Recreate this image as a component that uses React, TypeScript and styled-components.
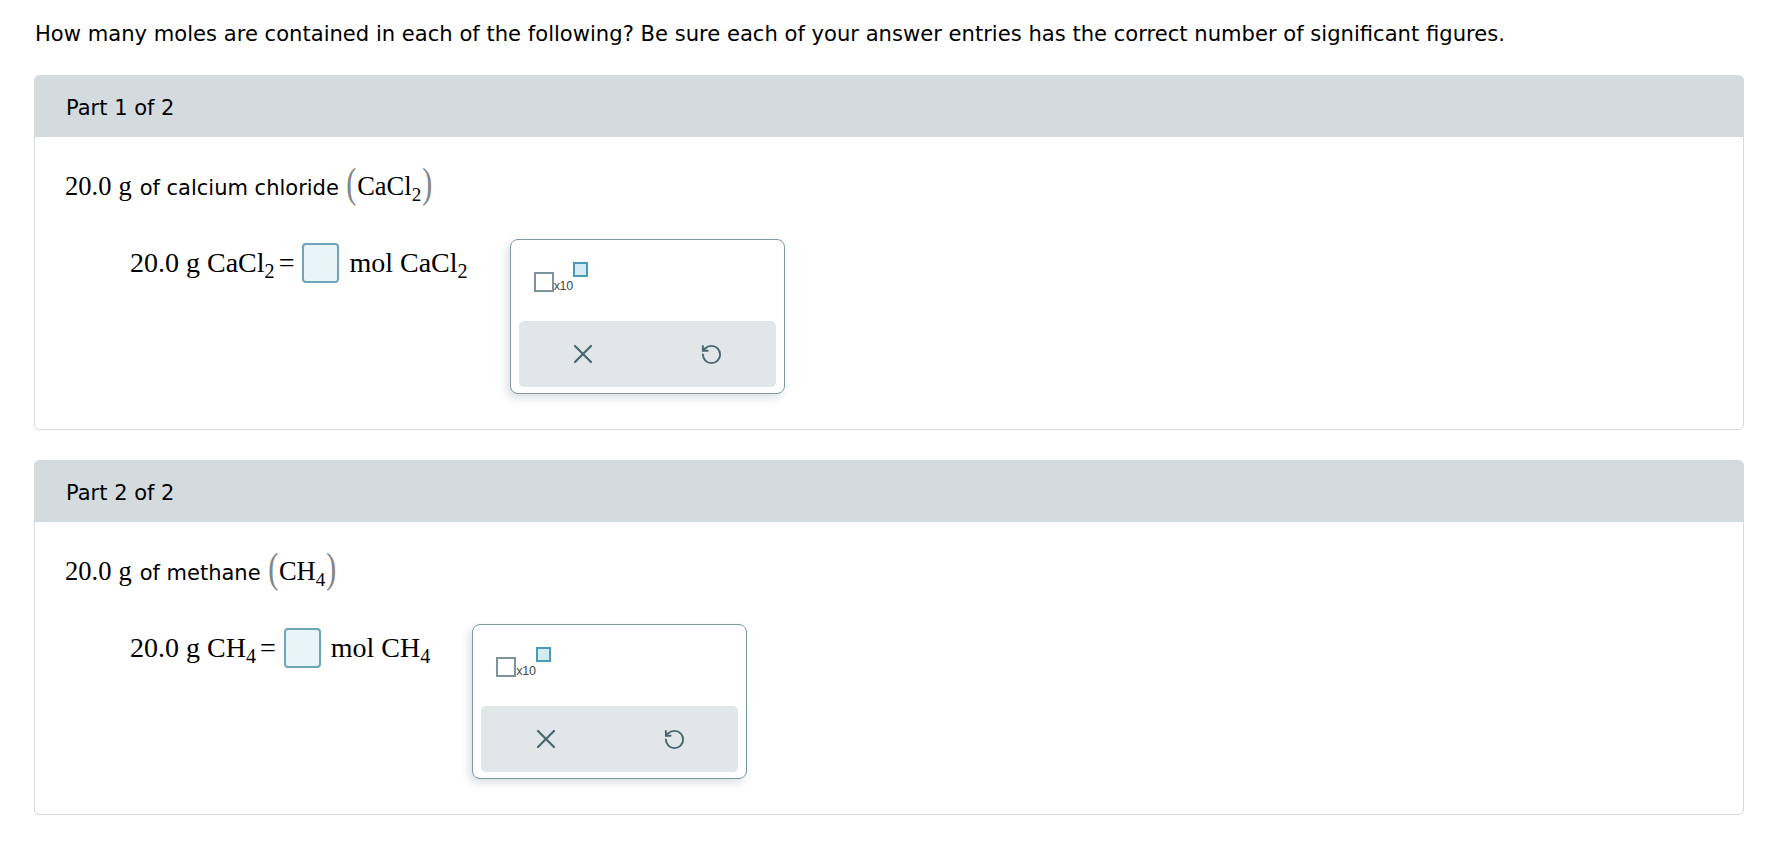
import React from "react";
import styled, { createGlobalStyle } from "styled-components";

const GlobalStyle = createGlobalStyle`
  html, body { margin: 0; padding: 0; background: #ffffff; }
  body {
    font-family: "DejaVu Sans", Verdana, sans-serif;
    color: #000000;
  }
`;

const Page = styled.main`
  padding: 19px 40px 40px 34px;
`;

const Question = styled.p`
  margin: 0 0 26px 1px;
  font-size: 21.1px;
  line-height: 30px;
`;

const PartCard = styled.section`
  border: 1px solid #d6dbde;
  border-radius: 5px;
  overflow: hidden;
  margin-bottom: 30px;
  background: #ffffff;
`;

const PartHeader = styled.header`
  height: 61px;
  background: #d3dbdf;
  display: flex;
  align-items: center;
  padding: 2px 31px 0 31px;
  box-sizing: border-box;
  font-size: 21px;
`;

const PartBody = styled.div`
  padding: 29px 30px 35px 30px;
`;

const Prompt = styled.div`
  height: 40px;
  line-height: 40px;
  font-family: "Liberation Serif", "Times New Roman", serif;
  font-size: 26.5px;
  white-space: nowrap;
`;

const SansText = styled.span`
  font-family: "DejaVu Sans", Verdana, sans-serif;
  font-size: 21px;
  margin: 0 6px 0 8px;
`;

const Num = styled.span`
  margin-right: 7px;
`;

const Paren = styled.span`
  color: #858585;
  font-size: 1.62em;
  line-height: 0;
  display: inline-block;
  transform: scaleX(0.7) translateY(2px);
  margin: 0 -1px;
`;

const Sub = styled.sub`
  font-size: 0.72em;
  vertical-align: -0.3em;
  line-height: 0;
`;

const AnswerRow = styled.div`
  margin-top: 33px;
  padding-left: 65px;
  display: flex;
  align-items: flex-start;
`;

const Equation = styled.div`
  margin-top: 4px;
  height: 40px;
  line-height: 40px;
  font-family: "Liberation Serif", "Times New Roman", serif;
  font-size: 28px;
  white-space: nowrap;
`;

const Equals = styled.span`
  margin: 0 8px 0 4px;
`;

const AnswerBox = styled.span`
  box-sizing: border-box;
  display: inline-block;
  vertical-align: top;
  width: 37px;
  height: 40px;
  border: 2px solid #6ea6b8;
  border-radius: 4px;
  background: #e8f4f8;
  margin-right: 10px;
`;

const Palette = styled.div`
  box-sizing: border-box;
  margin-left: 42px;
  width: 275px;
  height: 155px;
  border: 1px solid #7f98a2;
  border-radius: 8px;
  background: #ffffff;
  box-shadow: -3px 4px 8px rgba(60, 80, 90, 0.18);
  padding: 8px 8px 6px 8px;
  display: flex;
  flex-direction: column;
  justify-content: space-between;
`;

const SciWidget = styled.div`
  display: flex;
  align-items: flex-start;
  margin: 14px 0 0 15px;
  height: 40px;
`;

const BaseBox = styled.span`
  box-sizing: border-box;
  width: 20px;
  height: 20px;
  border: 2px solid #7e929a;
  margin-top: 10px;
  background: #ffffff;
`;

const Times10 = styled.span`
  font-family: "Liberation Sans", Arial, sans-serif;
  font-size: 12.5px;
  color: #3c4a50;
  margin-top: 17px;
  letter-spacing: -0.3px;
`;

const ExpBox = styled.span`
  box-sizing: border-box;
  width: 15px;
  height: 15px;
  border: 2px solid #4b9bb3;
  background: #d3ecf4;
`;

const ButtonBar = styled.div`
  height: 66px;
  background: #e1e6e9;
  border-radius: 5px;
  display: grid;
  grid-template-columns: 1fr 1fr;
  align-items: center;
  justify-items: center;
`;

const IconButton = styled.button`
  border: 0;
  background: transparent;
  padding: 0;
  width: 28px;
  height: 28px;
  display: flex;
  align-items: center;
  justify-content: center;
  color: #4a6670;
  cursor: pointer;
`;

const CloseIcon = () => (
  <svg width="22" height="22" viewBox="0 0 22 22" fill="none">
    <path d="M3 3 L19 19 M19 3 L3 19" stroke="currentColor" strokeWidth="2.2" strokeLinecap="round" />
  </svg>
);

const UndoIcon = () => (
  <svg width="23" height="23" viewBox="0 0 24 24" fill="none" stroke="currentColor" strokeWidth="2" strokeLinecap="round" strokeLinejoin="round">
    <path d="M3 12a9 9 0 1 0 9-9 9.75 9.75 0 0 0-6.74 2.74L3 8" />
    <path d="M3 3v5h5" />
  </svg>
);

type Part = {
  index: number;
  name: string;
  formula: React.ReactNode;
};

const CaCl2 = () => (
  <>
    CaCl<Sub>2</Sub>
  </>
);

const CH4 = () => (
  <>
    CH<Sub>4</Sub>
  </>
);

const parts: Part[] = [
  { index: 1, name: "calcium chloride", formula: <CaCl2 /> },
  { index: 2, name: "methane", formula: <CH4 /> },
];

const AnswerPalette = () => (
  <Palette>
    <SciWidget>
      <BaseBox />
      <Times10>x10</Times10>
      <ExpBox />
    </SciWidget>
    <ButtonBar>
      <IconButton aria-label="clear">
        <CloseIcon />
      </IconButton>
      <IconButton aria-label="undo">
        <UndoIcon />
      </IconButton>
    </ButtonBar>
  </Palette>
);

export default function App() {
  return (
    <>
      <GlobalStyle />
      <Page>
        <Question>
          How many moles are contained in each of the following? Be sure each of your answer entries has the correct
          number of significant figures.
        </Question>
        {parts.map((p) => (
          <PartCard key={p.index}>
            <PartHeader>
              Part {p.index} of {parts.length}
            </PartHeader>
            <PartBody>
              <Prompt>
                <Num>20.0</Num>g<SansText>of {p.name}</SansText>
                <Paren>(</Paren>
                {p.formula}
                <Paren>)</Paren>
              </Prompt>
              <AnswerRow>
                <Equation>
                  <Num>20.0</Num>g&nbsp;{p.formula}
                  <Equals>=</Equals>
                  <AnswerBox />
                  mol&nbsp;{p.formula}
                </Equation>
                <AnswerPalette />
              </AnswerRow>
            </PartBody>
          </PartCard>
        ))}
      </Page>
    </>
  );
}
